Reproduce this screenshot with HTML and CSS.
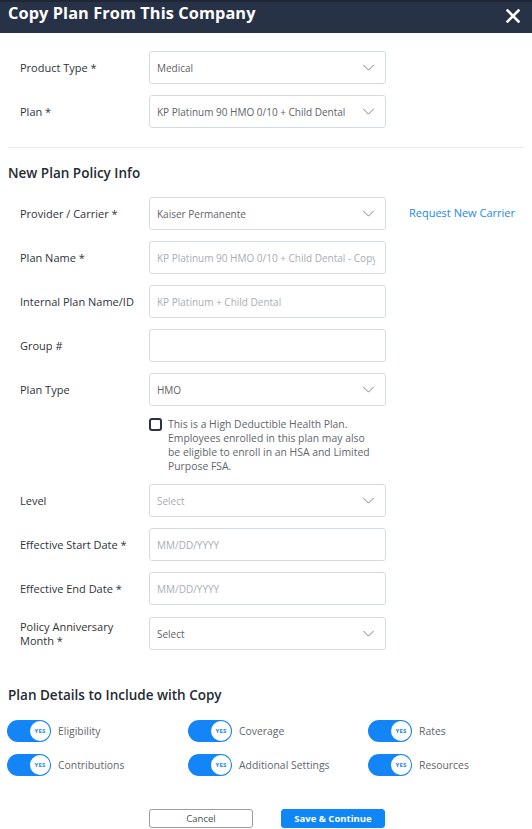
FILE: index.html
```html
<!DOCTYPE html>
<html>
<head>
<meta charset="utf-8">
<link rel="stylesheet" href="styles.css">
</head>
<body>
<div class="modal">
  <header class="modal-header">
    <h1 class="modal-title">Copy Plan From This Company</h1>
    <svg class="close-icon" width="14" height="14" viewBox="0 0 14 14"><path d="M1.5 1.5 L12.5 12.5 M12.5 1.5 L1.5 12.5" stroke="#fff" stroke-width="2.6" stroke-linecap="square"/></svg>
  </header>

  <section class="form-block top-block">
    <div class="row">
      <label class="row-label">Product Type *</label>
      <div class="field select"><span class="value">Medical</span><svg class="chev" viewBox="0 0 14 8"><path d="M1 1 L7 7 L13 1" fill="none" stroke="#6b7280" stroke-width="1"/></svg></div>
    </div>
    <div class="row">
      <label class="row-label">Plan *</label>
      <div class="field select"><span class="value">KP Platinum 90 HMO 0/10 + Child Dental</span><svg class="chev" viewBox="0 0 14 8"><path d="M1 1 L7 7 L13 1" fill="none" stroke="#6b7280" stroke-width="1"/></svg></div>
    </div>
  </section>

  <hr class="divider">

  <h2 class="section-title">New Plan Policy Info</h2>
  <section class="form-block">
    <div class="row">
      <label class="row-label">Provider / Carrier *</label>
      <div class="field select"><span class="value">Kaiser Permanente</span><svg class="chev" viewBox="0 0 14 8"><path d="M1 1 L7 7 L13 1" fill="none" stroke="#6b7280" stroke-width="1"/></svg></div>
      <a class="link">Request New Carrier</a>
    </div>
    <div class="row">
      <label class="row-label">Plan Name *</label>
      <div class="field"><span class="value muted clip">KP Platinum 90 HMO 0/10 + Child Dental - Copy</span></div>
    </div>
    <div class="row">
      <label class="row-label">Internal Plan Name/ID</label>
      <div class="field"><span class="value muted">KP Platinum + Child Dental</span></div>
    </div>
    <div class="row">
      <label class="row-label">Group #</label>
      <div class="field"></div>
    </div>
    <div class="row">
      <label class="row-label">Plan Type</label>
      <div class="field select"><span class="value">HMO</span><svg class="chev" viewBox="0 0 14 8"><path d="M1 1 L7 7 L13 1" fill="none" stroke="#6b7280" stroke-width="1"/></svg></div>
    </div>
    <div class="check-row">
      <span class="checkbox"></span>
      <p class="check-text">This is a High Deductible Health Plan. Employees enrolled in this plan may also be eligible to enroll in an HSA and Limited Purpose FSA.</p>
    </div>
    <div class="row">
      <label class="row-label">Level</label>
      <div class="field select"><span class="value muted">Select</span><svg class="chev" viewBox="0 0 14 8"><path d="M1 1 L7 7 L13 1" fill="none" stroke="#6b7280" stroke-width="1"/></svg></div>
    </div>
    <div class="row">
      <label class="row-label">Effective Start Date *</label>
      <div class="field"><span class="value muted">MM/DD/YYYY</span></div>
    </div>
    <div class="row row-gap1">
      <label class="row-label">Effective End Date *</label>
      <div class="field"><span class="value muted">MM/DD/YYYY</span></div>
    </div>
    <div class="row">
      <label class="row-label two-line">Policy Anniversary Month *</label>
      <div class="field select"><span class="value">Select</span><svg class="chev" viewBox="0 0 14 8"><path d="M1 1 L7 7 L13 1" fill="none" stroke="#6b7280" stroke-width="1"/></svg></div>
    </div>
  </section>

  <h2 class="section-title details-title">Plan Details to Include with Copy</h2>
  <section class="toggles">
    <div class="toggle-item"><span class="toggle"><span class="knob">YES</span></span><span class="toggle-label">Eligibility</span></div>
    <div class="toggle-item"><span class="toggle"><span class="knob">YES</span></span><span class="toggle-label">Coverage</span></div>
    <div class="toggle-item"><span class="toggle"><span class="knob">YES</span></span><span class="toggle-label">Rates</span></div>
    <div class="toggle-item"><span class="toggle"><span class="knob">YES</span></span><span class="toggle-label">Contributions</span></div>
    <div class="toggle-item"><span class="toggle"><span class="knob">YES</span></span><span class="toggle-label">Additional Settings</span></div>
    <div class="toggle-item"><span class="toggle"><span class="knob">YES</span></span><span class="toggle-label">Resources</span></div>
  </section>

  <footer class="actions">
    <button class="btn btn-cancel">Cancel</button>
    <button class="btn btn-primary">Save &amp; Continue</button>
  </footer>
</div>
</body>
</html>
```

FILE: styles.css
```css
* { box-sizing: border-box; }
html, body { margin: 0; padding: 0; background: #fff; }
body {
  font-family: "Open Sans", "DejaVu Sans", sans-serif;
  color: #2b2f36;
  width: 532px;
  height: 829px;
  overflow: hidden;
}
.modal { width: 532px; }

.modal-header {
  height: 33px;
  background: #283247;
  border-top: 2px solid #1f2636;
  display: flex;
  align-items: flex-start;
  justify-content: space-between;
  padding: 0 12px 0 8px;
}
.modal-title {
  margin: 0;
  color: #fff;
  font-size: 16.3px;
  font-weight: 700;
  line-height: 22px;
  letter-spacing: 0.1px;
}
.close-icon { margin-top: 7px; }

.form-block { padding-left: 20px; }
.top-block { padding-top: 18px; }

.row {
  display: grid;
  grid-template-columns: 129px 237px auto;
  align-items: center;
  height: 33px;
  margin-bottom: 11px;
}
.row-gap1 { margin-top: 1px; margin-bottom: 12px; }
.row-label {
  font-size: 11px;
  font-weight: 500;
  color: #2f3338;
  line-height: 14px;
}
.two-line { width: 110px; }

.field {
  height: 33px;
  border: 1px solid #d5dde4;
  border-radius: 3px;
  display: flex;
  align-items: center;
  padding: 0 10px 0 7px;
  overflow: hidden;
}
.select { justify-content: space-between; }
.value {
  font-size: 10px;
  color: #5f6368;
  white-space: nowrap;
  padding-top: 1px;
}
.muted { color: #a9adb2; }
.clip { overflow: hidden; }
.chev { width: 13px; height: 7px; flex: none; margin-left: 6px; }

.link {
  font-size: 11px;
  font-weight: 500;
  color: #1789f0;
  padding-left: 23px;
  white-space: nowrap;
  margin-top: -2px;
}

.divider {
  border: 0;
  border-top: 1px solid #e6e9ed;
  margin: 19px 8px 0 8px;
}
.section-title {
  margin: 0;
  padding-left: 8px;
  font-size: 13.5px;
  font-weight: 600;
  color: #252a33;
  line-height: 20px;
  padding-top: 15px;
  padding-bottom: 14px;
}

.check-row {
  display: flex;
  margin-left: 129px;
  margin-top: 2px;
  margin-bottom: 11px;
  gap: 6px;
}
.checkbox {
  width: 13px;
  height: 13px;
  border: 2px solid #283247;
  border-radius: 3px;
  flex: none;
  margin-top: 1px;
}
.check-text {
  margin: 0;
  width: 208px;
  font-size: 10.4px;
  line-height: 14px;
  color: #62666b;
}

.details-title { padding-top: 24px; padding-bottom: 15px; }

.toggles {
  display: grid;
  grid-template-columns: 181px 180px 150px;
  row-gap: 12px;
  padding-left: 7px;
}
.toggle-item { display: flex; align-items: center; gap: 7px; }
.toggle {
  width: 44px;
  height: 22px;
  background: #1485f7;
  border-radius: 11px;
  display: flex;
  align-items: center;
  justify-content: flex-end;
  padding-right: 1px;
  flex: none;
}
.knob {
  width: 20px;
  height: 20px;
  border-radius: 50%;
  background: #fff;
  color: #1485f7;
  font-size: 6px;
  font-weight: 700;
  display: flex;
  align-items: center;
  justify-content: center;
  letter-spacing: 0.2px;
}
.toggle-label { font-size: 10.4px; color: #62666b; }

.actions {
  display: flex;
  gap: 28px;
  padding-left: 149px;
  padding-top: 33px;
}
.btn {
  width: 104px;
  height: 19px;
  border-radius: 3px;
  font-family: "Open Sans", "DejaVu Sans", sans-serif;
  font-size: 9.5px;
  padding: 0;
  line-height: 17px;
}
.btn-cancel {
  background: #fff;
  border: 1px solid #9a9ea3;
  color: #4b4f55;
}
.btn-primary {
  background: #0f86f5;
  border: 1px solid #0f86f5;
  color: #fff;
  font-weight: 700;
}
```
